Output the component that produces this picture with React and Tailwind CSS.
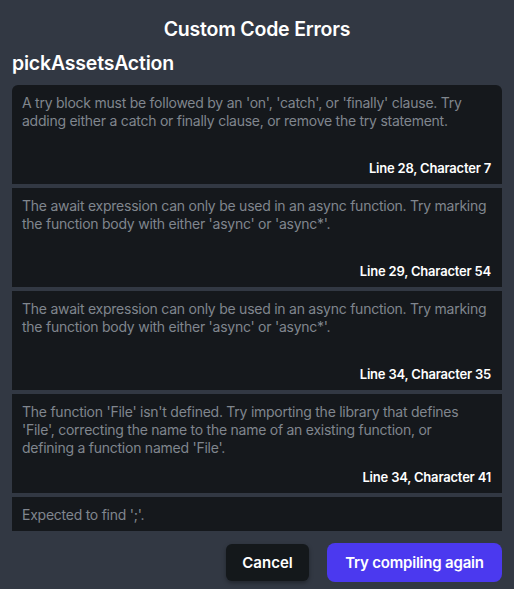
import React from "react";

// line breaks kept as in the compiler dialog
const errors = [
  {
    message:
      "A try block must be followed by an 'on', 'catch', or 'finally' clause. Try\nadding either a catch or finally clause, or remove the try statement.",
    location: "Line 28, Character 7",
  },
  {
    message:
      "The await expression can only be used in an async function. Try marking\nthe function body with either 'async' or 'async*'.",
    location: "Line 29, Character 54",
  },
  {
    message:
      "The await expression can only be used in an async function. Try marking\nthe function body with either 'async' or 'async*'.",
    location: "Line 34, Character 35",
  },
  {
    message:
      "The function 'File' isn't defined. Try importing the library that defines\n'File', correcting the name to the name of an existing function, or\ndefining a function named 'File'.",
    location: "Line 34, Character 41",
  },
  {
    message: "Expected to find ';'.",
    location: "Line 34, Character 45",
  },
];

export default function App() {
  return (
    <div
      className="w-[514px] h-[589px] bg-[#323843] flex flex-col overflow-hidden"
      style={{ fontFamily: "Inter, 'Noto Sans', sans-serif" }}
    >
      <h1 className="pt-[16px] text-center text-[19.5px] leading-[26px] font-semibold text-white tracking-[-0.2px]">
        Custom Code Errors
      </h1>
      <h2 className="mt-[8px] px-3 text-[19.5px] leading-[26px] font-semibold text-white tracking-[-0.2px]">
        pickAssetsAction
      </h2>

      <div className="mt-[9px] mx-3 h-[446px] shrink-0 rounded-t-md overflow-hidden flex flex-col gap-1">
        {errors.map((err, i) => (
          <div
            key={i}
            className="shrink-0 h-[99px] bg-[#15181c] pt-[9px] pb-[7px] pl-[10px] pr-[11px] flex flex-col justify-between"
          >
            <p className="whitespace-pre-line text-[14px] leading-[18px] text-[#80868e] tracking-[-0.25px]">
              {err.message}
            </p>
            <p className="text-right text-[13px] leading-[18px] font-semibold text-white tracking-[-0.2px]">
              {err.location}
            </p>
          </div>
        ))}
      </div>

      <div className="mt-[12px] px-3 flex justify-end items-center gap-[18px]">
        <button className="h-[37px] w-[83px] rounded-md bg-[#14181b] text-white text-[15px] leading-[20px] font-semibold shadow-[0_2px_4px_rgba(0,0,0,0.35)]">
          Cancel
        </button>
        <button className="h-[39px] w-[175px] rounded-lg bg-[#4b39ef] text-white text-[15px] leading-[20px] font-semibold tracking-[-0.2px]">
          Try compiling again
        </button>
      </div>
    </div>
  );
}
